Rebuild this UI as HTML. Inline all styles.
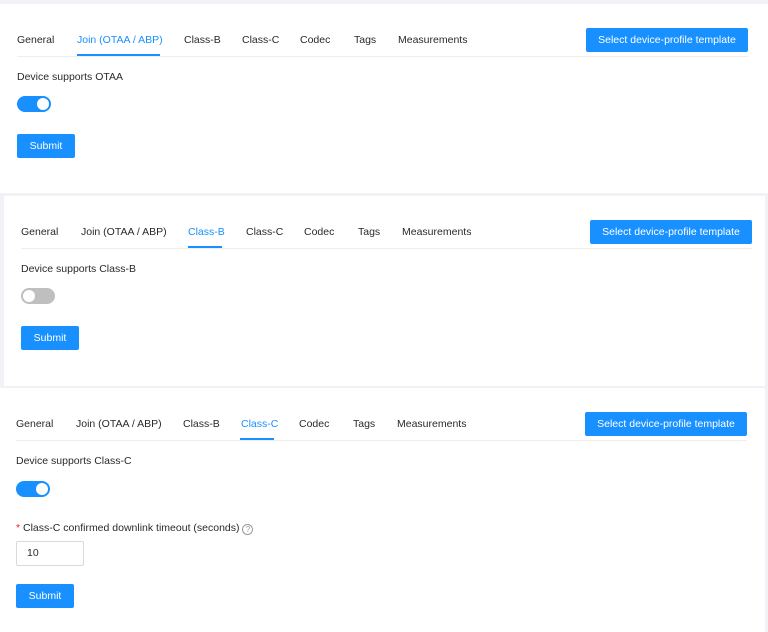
<!DOCTYPE html><html><head><style>
*{margin:0;padding:0;box-sizing:border-box}
body{width:768px;height:632px;background:#f0f2f5;font-family:"Liberation Sans",sans-serif;font-size:10.5px;color:rgba(0,0,0,.85);position:relative;overflow:hidden}
.p{position:absolute;background:#fff}
.a{position:absolute;white-space:nowrap;line-height:14px}
.t{position:absolute;top:33px;white-space:nowrap;line-height:14px}
.act{color:#1890ff}
.ul{position:absolute;top:54px;height:2px;background:#1890ff}
.dv{position:absolute;left:17px;width:731px;top:56px;height:1px;background:#eee}
.btn{position:absolute;background:#1890ff;color:#fff;border-radius:2px;text-align:center;line-height:24px;height:24px}
.tg{position:absolute;width:34px;height:16px;border-radius:8px}
.tg i{position:absolute;top:2px;width:12px;height:12px;border-radius:50%;background:#fff}
</style></head><body>

<div class="p" style="left:0;top:4px;width:768px;height:189px">
<div style="position:relative;top:-4px">
<div class="t" style="left:17px">General</div>
<div class="t act" style="left:77px">Join (OTAA / ABP)</div>
<div class="t" style="left:184px">Class-B</div>
<div class="t" style="left:242px">Class-C</div>
<div class="t" style="left:300px">Codec</div>
<div class="t" style="left:354px">Tags</div>
<div class="t" style="left:398px">Measurements</div>
<div class="dv"></div><div class="ul" style="left:77px;width:83px"></div>
<div class="btn" style="left:586px;top:28px;width:162px">Select device-profile template</div>
<div class="a" style="left:17px;top:70px">Device supports OTAA</div>
<div class="tg" style="left:17px;top:96px;background:#1890ff"><i style="left:20px"></i></div>
<div class="btn" style="left:17px;top:134px;width:58px">Submit</div>
</div></div>

<div class="p" style="left:4px;top:196px;width:761px;height:190px">
<div style="position:relative;top:-4px;left:0">
<div class="t" style="left:17px">General</div>
<div class="t" style="left:77px">Join (OTAA / ABP)</div>
<div class="t act" style="left:184px">Class-B</div>
<div class="t" style="left:242px">Class-C</div>
<div class="t" style="left:300px">Codec</div>
<div class="t" style="left:354px">Tags</div>
<div class="t" style="left:398px">Measurements</div>
<div class="dv"></div><div class="ul" style="left:184px;width:34px"></div>
<div class="btn" style="left:586px;top:28px;width:162px">Select device-profile template</div>
<div class="a" style="left:17px;top:70px">Device supports Class-B</div>
<div class="tg" style="left:17px;top:96px;background:#bfbfbf"><i style="left:2px"></i></div>
<div class="btn" style="left:17px;top:134px;width:58px">Submit</div>
</div></div>

<div class="p" style="left:0;top:388px;width:765px;height:244px">
<div style="position:relative;top:-4px;left:-1px">
<div class="t" style="left:17px">General</div>
<div class="t" style="left:77px">Join (OTAA / ABP)</div>
<div class="t" style="left:184px">Class-B</div>
<div class="t act" style="left:242px">Class-C</div>
<div class="t" style="left:300px">Codec</div>
<div class="t" style="left:354px">Tags</div>
<div class="t" style="left:398px">Measurements</div>
<div class="dv"></div><div class="ul" style="left:241px;width:34px"></div>
<div class="btn" style="left:586px;top:28px;width:162px">Select device-profile template</div>
<div class="a" style="left:17px;top:70px">Device supports Class-C</div>
<div class="tg" style="left:17px;top:97px;background:#1890ff"><i style="left:20px"></i></div>
<div class="a" style="left:17px;top:137px"><span style="color:#f5222d">*</span> Class-C confirmed downlink timeout (seconds) <span style="display:inline-block;width:11px;height:11px;border:1px solid #999;border-radius:50%;font-size:8px;line-height:9px;text-align:center;color:#999;vertical-align:-1px">?</span></div>
<div style="position:absolute;left:17px;top:157px;width:68px;height:25px;border:1px solid #d9d9d9;border-radius:2px;padding-left:10px;line-height:23px">10</div>
<div class="btn" style="left:17px;top:200px;width:58px">Submit</div>
</div></div>
</body></html>
